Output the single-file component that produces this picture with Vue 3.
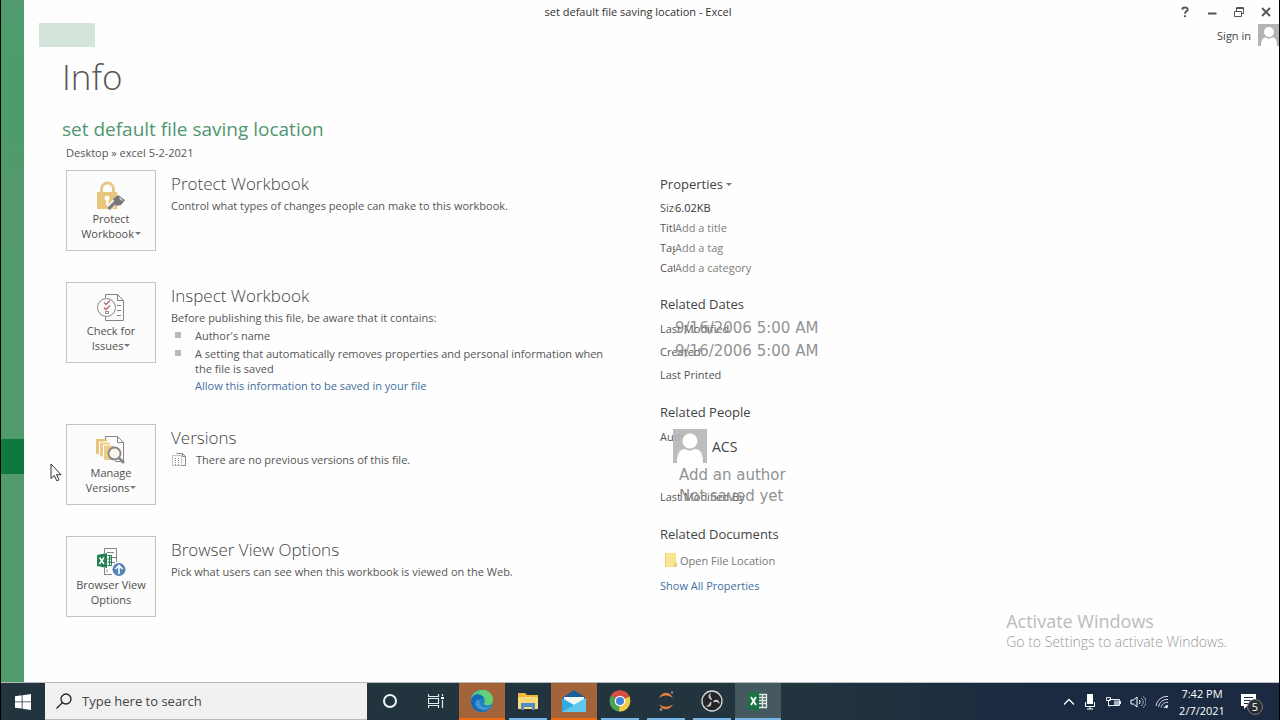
<script setup>
import { ref } from 'vue'

const search = ref('')

const details = [
  { label: 'Size', value: '6.02KB', dark: true },
  { label: 'Title', value: 'Add a title' },
  { label: 'Tags', value: 'Add a tag' },
  { label: 'Categories', value: 'Add a category' }
]

const dates = [
  { label: 'Last Modified', value: '9/16/2006 5:00 AM' },
  { label: 'Created', value: '9/16/2006 5:00 AM' },
  { label: 'Last Printed', value: '' }
]
</script>

<template>
  <div class="screen">
    <div class="window">
      <nav class="rail" aria-label="Backstage">
        <button class="rail-item" type="button" aria-label="Selected command"></button>
      </nav>

      <div class="backstage">
        <header class="titlebar">
          <span class="title">set default file saving location - Excel</span>
          <div class="controls">
            <button type="button" aria-label="Help">
              <svg width="12" height="12" viewBox="0 0 12 12" fill="none" stroke="#555" stroke-width="2"><path d="M3.2 3.6C3.4 0.8 8.8 0.8 8.6 3.7 8.5 5.4 6 5.3 6 7.8M6 9.2V11" /></svg>
            </button>
            <button type="button" aria-label="Minimize">
              <svg width="12" height="12" viewBox="0 0 12 12" fill="none" stroke="#555" stroke-width="2"><path d="M2 7.5H10.500" /></svg>
            </button>
            <button type="button" aria-label="Restore">
              <svg width="12" height="12" viewBox="0 0 12 12" fill="none" stroke="#555"><path d="M1.500 5.500H8.500V10.500H1.500ZM3.500 5V1.500H10.500V7.500H9M3.500 2.500H10.500" /></svg>
            </button>
            <button type="button" aria-label="Close">
              <svg width="12" height="12" viewBox="0 0 12 12" fill="none" stroke="#555" stroke-width="1.800"><path d="M2 2L10 10M10 2L2 10" /></svg>
            </button>
          </div>
        </header>

        <div class="account">
          <div class="back-tile"></div>
          <button class="signin" type="button">
            <span>Sign in</span>
            <svg width="21" height="22" viewBox="0 0 21 22"><path fill="#b4b4b4" d="M0 0H21V22H0Z" /><circle cx="11" cy="8" r="5" fill="#fff" /><path fill="#fff" d="M3 22C3 15 6 13 8 13.500L11 15 14 13.500C17 13 19 15 19 22Z" /></svg>
          </button>
        </div>

        <main class="page">
          <h1>Info</h1>
          <h2 class="doc-name">set default file saving location</h2>
          <p class="path">Desktop » excel 5-2-2021</p>

          <div class="columns">
            <div class="actions">
              <section class="action">
                <button class="tile" type="button">
                  <svg width="32" height="30" viewBox="0 0 32 30">
                    <path d="M6.500 12V8A6 6 0 0 1 18.500 8V12" fill="none" stroke="#e6c789" stroke-width="3" />
                    <path d="M2 11H22V28H2Z" fill="#eac67c" />
                    <circle cx="12" cy="17" r="2.500" fill="#fff" /><path d="M11 18H13.500V24H11Z" fill="#fff" />
                    <path d="M14 27L22 19" stroke="#fff" stroke-width="6" />
                    <path d="M13.500 28L20 21.500" stroke="#808080" stroke-width="3.500" />
                    <path d="M18 18L23 14 30 19 26 24 21 25Z" fill="#777" /><path d="M24.500 17L27.500 19.500" stroke="#ddd" stroke-width="1.500" />
                  </svg>
                  <span>Protect<br>Workbook <i class="caret"></i></span>
                </button>
                <div>
                  <h3>Protect Workbook</h3>
                  <p>Control what types of changes people can make to this workbook.</p>
                </div>
              </section>

              <section class="action">
                <button class="tile" type="button">
                  <svg width="32" height="30" viewBox="0 0 32 30" fill="none" stroke="#858585">
                    <path d="M10.500 5V1.500H22.500L28.500 7.500V27.500H10.500V24M22.500 1.500V7.500H28.500" />
                    <path d="M22 12.500H26M22 17.500H26M22 22.500H26" />
                    <circle cx="11.500" cy="14.500" r="9" fill="#fcfcfc" />
                    <path d="M9 9.500L11 11.500 15 7.500M9 14.500L11 16.500 15 12.500" stroke="#bd6a70" stroke-width="1.300" />
                    <path d="M10.500 18.500H13.500V20.500H10.500Z" />
                  </svg>
                  <span>Check for<br>Issues <i class="caret"></i></span>
                </button>
                <div>
                  <h3>Inspect Workbook</h3>
                  <p>Before publishing this file, be aware that it contains:</p>
                  <ul class="findings">
                    <li>Author's name</li>
                    <li>A setting that automatically removes properties and personal information when the file is saved</li>
                  </ul>
                  <a class="allow" href="#allow">Allow this information to be saved in your file</a>
                </div>
              </section>

              <section class="action">
                <button class="tile" type="button">
                  <svg width="32" height="30" viewBox="0 0 32 30" fill="none">
                    <path d="M10.500 4V1.500H22.500L28.500 7.500V26.500H20M22.500 1.500V7.500H28.500" stroke="#858585" />
                    <path d="M1 4H12V19H1Z" fill="#e7c37c" /><path d="M4.500 7H15.500V22H4.500Z" fill="#eccb87" stroke="#fff" /><path d="M8.500 10H19.500V25.500H8.500Z" fill="#edcd8b" stroke="#fff" />
                    <circle cx="19.500" cy="18.500" r="6" fill="#f9f5ec" stroke="#858585" stroke-width="1.800" />
                    <path d="M24 23L29 28" stroke="#858585" stroke-width="2.600" />
                  </svg>
                  <span>Manage<br>Versions <i class="caret"></i></span>
                </button>
                <div>
                  <h3>Versions</h3>
                  <p class="no-versions">
                    <svg width="16" height="14" viewBox="0 0 16 14" fill="none" stroke="#888"><path d="M5.500 0.500H11.500L14.500 3.500V12.500H11M11.500 0.500V3.500H14.500" /><path d="M1.500 2.500H10.500V12.500H1.500ZM4.500 5V12M7.500 5V12" stroke-dasharray="1 1" /></svg>
                    <span>There are no previous versions of this file.</span>
                  </p>
                </div>
              </section>

              <section class="action">
                <button class="tile" type="button">
                  <svg width="32" height="30" viewBox="0 0 32 30" fill="none">
                    <path d="M9.500 6V1.500H21.500V15M9.500 21V27.500H17" stroke="#858585" />
                    <path d="M12 5.500H19M15 10.500H21M15 15.500H20M12 22.500V25" stroke="#858585" />
                    <path d="M2 8L12 6V21L2 19Z" fill="#258052" /><path d="M4.500 10.500L9 17M9 10.500L4.500 17" stroke="#fff" stroke-width="1.500" />
                    <path d="M12.500 8.500H16.500V18.500H12.500M14.500 8.500V18.500M12.500 12H16.500M12.500 15H16.500" stroke="#258052" />
                    <circle cx="24" cy="22.500" r="6.500" fill="#5584b8" /><path d="M24 27V19M20.500 22L24 18.500 27.500 22" stroke="#fff" stroke-width="1.600" />
                  </svg>
                  <span>Browser View<br>Options</span>
                </button>
                <div>
                  <h3>Browser View Options</h3>
                  <p>Pick what users can see when this workbook is viewed on the Web.</p>
                </div>
              </section>
            </div>

            <aside class="props">
              <section>
                <button class="props-menu" type="button">Properties <i class="caret"></i></button>
                <dl class="details">
                  <div v-for="d in details" :key="d.label">
                    <dt>{{ d.label }}</dt>
                    <dd :class="{ dark: d.dark }">{{ d.value }}</dd>
                  </div>
                </dl>
              </section>

              <section>
                <h4>Related Dates</h4>
                <dl class="dates">
                  <div v-for="d in dates" :key="d.label">
                    <dt>{{ d.label }}</dt>
                    <dd class="wide">{{ d.value }}</dd>
                  </div>
                </dl>
              </section>

              <section>
                <h4>Related People</h4>
                <dl class="people">
                  <div class="author">
                    <dt>Author</dt>
                    <dd>
                      <span class="person">
                        <svg width="34" height="34" viewBox="0 0 34 34"><path fill="#b6b6b6" fill-opacity="0.900" d="M0 0H34V34H0Z" /><circle cx="17" cy="12" r="7.500" fill="#fff" /><path fill="#fff" d="M4 34C4 24 7 20 12 20L17 22 22 20C27 20 30 24 30 34Z" /></svg>
                        <span>ACS</span>
                      </span>
                      <span class="wide">Add an author</span>
                    </dd>
                  </div>
                  <div class="modifier">
                    <dt>Last Modified By</dt>
                    <dd class="wide">Not saved yet</dd>
                  </div>
                </dl>
              </section>

              <section>
                <h4>Related Documents</h4>
                <a class="open-file" href="#open">
                  <svg width="14" height="16" viewBox="0 0 14 16"><path fill="#f6e48f" d="M1 1H12V10L13 11V15H1Z" /><path fill="#e8d077" d="M1 1H2V15H1ZM10 11H13V15H10Z" /></svg>
                  <span>Open File Location</span>
                </a>
                <a class="show-all" href="#all">Show All Properties</a>
              </section>
            </aside>
          </div>
        </main>
      </div>

      <div class="watermark">
        <strong>Activate Windows</strong>
        <span>Go to Settings to activate Windows.</span>
      </div>

      <svg class="pointer" width="12" height="19" viewBox="0 0 12 19"><path d="M1 1V15.500L4.300 12.500 6.800 17.800 9 16.800 6.500 11.700H11Z" fill="#fff" stroke="#333" /></svg>
    </div>

    <footer class="taskbar">
      <button class="start" type="button" aria-label="Start">
        <svg width="16" height="16" viewBox="0 0 16 16" fill="#fff"><path d="M0 2.300L6.700 1.300V7.500H0ZM7.500 1.200L16 0V7.500H7.500ZM0 8.300H6.700V14.600L0 13.700ZM7.500 8.300H16V16L7.500 14.800Z" /></svg>
      </button>
      <label class="search">
        <svg width="16" height="16" viewBox="0 0 16 16" fill="none" stroke="#222" stroke-width="1.300"><circle cx="10" cy="6" r="5" /><path d="M6.500 9.500L0.500 15.500" /></svg>
        <input v-model="search" type="text" placeholder="Type here to search" aria-label="Type here to search">
      </label>
      <div class="apps">
        <button type="button" aria-label="Cortana">
          <svg width="16" height="16" viewBox="0 0 16 16"><circle cx="8" cy="8" r="6" fill="none" stroke="#edf3f5" stroke-width="2" /></svg>
        </button>
        <button type="button" aria-label="Task View">
          <svg width="16" height="16" viewBox="0 0 16 16" fill="none" stroke="#e3eaec" stroke-width="1.200"><path d="M0.500 1V3.500H10.500V1M0.500 5.500H10.500V10.500H0.500ZM0.500 15V12.500H10.500V15M14.500 1V3M14.500 7V15" /><path d="M13 4H16V6H13Z" fill="#fff" stroke="none" /></svg>
        </button>
        <button class="alert" type="button" aria-label="Edge">
          <svg width="24" height="24" viewBox="0 0 24 24"><circle cx="12" cy="12" r="11" fill="#1c83c8" /><path d="M1 11C2 -2 22 -3 23 11 23 17 16 17 14 15 17 10 11 6 6 8 3 9 1 11 1 11Z" fill="#49c7a0" /><path d="M1 11C3 3 13 4 14 10 10 8 8 12 9 15 10 19 15 21 20 19 11 27 0 21 1 11Z" fill="#1769b5" /><path d="M12 1C19 1 24 7 23 12 22 17 16 17 14 15 17 10 15 6 8 5Z" fill="#65cf74" /><path d="M10 11C8 17 14 20 21 17 17 23 9 22 6 17 4 13 7 10 10 11Z" fill="#4196d1" /></svg>
        </button>
        <button class="open" type="button" aria-label="File Explorer">
          <svg width="22" height="20" viewBox="0 0 22 20"><path d="M1 2H8L10 4H21V18H1Z" fill="#efb73e" /><path d="M1 6H21V18H1Z" fill="#fbd975" /><path d="M4 12H18V19H15V16H7V19H4Z" fill="#538dc6" /></svg>
        </button>
        <button class="alert" type="button" aria-label="Mail">
          <svg width="24" height="22" viewBox="0 0 24 22"><path d="M0 8L12 0 24 8V22H0Z" fill="#175e9c" /><path d="M2 7H22V17H2Z" fill="#f2f6f8" /><path d="M0 8L12 15 24 8V22H0Z" fill="#34abe0" /><path d="M0 22L24 8V22Z" fill="#60c8ef" /></svg>
        </button>
        <button class="open" type="button" aria-label="Chrome">
          <svg width="22" height="22" viewBox="0 0 22 22"><circle cx="11" cy="11" r="10.500" fill="#4ba454" /><path d="M11 11L2 5.500C7 -2 17 -1 20.500 6.500Z" fill="#d84e40" /><path d="M11 11L20.500 6.500C23 14 18 22 10 21.500Z" fill="#f4ca45" /><circle cx="11" cy="11" r="5.300" fill="#fff" /><circle cx="11" cy="11" r="4" fill="#4384df" /></svg>
        </button>
        <button class="open" type="button" aria-label="Jupyter">
          <svg width="18" height="20" viewBox="0 0 18 20"><path d="M2 7C5 0 13 0 16 7 12 3.500 6 3.500 2 7ZM2 13C5 20 13 20 16 13 12 16.500 6 16.500 2 13Z" fill="#e67c3b" /><circle cx="15" cy="1.500" r="1" fill="#aaa" /><circle cx="4" cy="18.500" r="1.200" fill="#aaa" /></svg>
        </button>
        <button class="open" type="button" aria-label="OBS">
          <svg width="22" height="22" viewBox="0 0 22 22"><circle cx="11" cy="11" r="10" fill="#252629" stroke="#d8dadc" stroke-width="1.300" /><g fill="#c8cacc"><path d="M10 3C6 5 7 9 11 10 11 7 8 7 10 3Z" /><path d="M10 3C6 5 7 9 11 10 11 7 8 7 10 3Z" transform="rotate(120 11 11)" /><path d="M10 3C6 5 7 9 11 10 11 7 8 7 10 3Z" transform="rotate(240 11 11)" /></g></svg>
        </button>
        <button class="open current" type="button" aria-label="Excel">
          <svg width="20" height="20" viewBox="0 0 20 20" fill="none"><path d="M0 2L11 0V20L0 18Z" fill="#187542" /><path d="M3 6L8 14M8 6L3 14" stroke="#fff" stroke-width="1.800" /><path d="M11 3.500H18.500V16.500H11M14.500 3.500V16.500M11 6.500H18.500M11 9.500H18.500M11 12.500H18.500" stroke="#dcece2" stroke-width="1.300" /></svg>
        </button>
      </div>
      <div class="tray">
        <button type="button" aria-label="Show hidden icons"><svg width="12" height="14" viewBox="0 0 12 14" fill="none" stroke="#fff" stroke-width="1.300"><path d="M1 9.500L6 4.500 11 9.500" /></svg></button>
        <button type="button" aria-label="Microphone"><svg width="12" height="16" viewBox="0 0 12 16" fill="none" stroke="#fff"><path d="M3 0H9V10H3Z" fill="#fff" stroke="none" /><path d="M1.500 8V12.500H10.500V8M6 12V15M3 15H9" /></svg></button>
        <button type="button" aria-label="Battery"><svg width="16" height="14" viewBox="0 0 16 14" fill="none" stroke="#e9edf2"><path d="M4 4.500H14.500V10.500H4.500M15.500 6V9" /><path d="M9 5.500H14V10H9Z" fill="#aab2c0" stroke="none" /><path d="M1.500 2.500H5.500V5.500H1.500ZM3.500 5.500V11H5" /></svg></button>
        <button type="button" aria-label="Volume"><svg width="16" height="14" viewBox="0 0 16 14" fill="none" stroke="#fff"><path d="M1 5H3.500L7 2V12L3.500 9H1ZM9 5C10.500 6 10.500 8 9 9" /><path d="M11 3C14 5 14 9 11 11M13 1.500C17 4 17 10 13 12.500" stroke="#9ca5b4" /></svg></button>
        <button type="button" aria-label="Network"><svg width="14" height="14" viewBox="0 0 14 14" fill="none" stroke="#d7dce5"><path d="M1 11C2 5 7 1 13 1.500M3.500 12C4.500 7 8 4 13 4.500M6 12.500C7 9 9 7 13 7.500M9 13C9.500 11.500 10.500 10.500 13 10.500" /><circle cx="11.500" cy="12" r="1.300" fill="#fff" stroke="none" /></svg></button>
        <button class="clock" type="button"><span>7:42 PM</span><span>2/7/2021</span></button>
        <button class="notify" type="button" aria-label="5 notifications">
          <svg width="16" height="16" viewBox="0 0 16 16"><path fill="#fff" d="M0 0H15V12H6L3 15V12H0Z" /><path d="M3 3.500H12M3 6.500H12M3 9.500H9" stroke="#1b2941" /></svg>
          <span class="badge">5</span>
        </button>
      </div>
    </footer>
  </div>
</template>

<style>
body {
  margin: 0;
}
</style>

<style scoped>
* {
  box-sizing: border-box;
}

.screen {
  display: flex;
  flex-direction: column;
  min-height: 100vh;
  border: solid #000;
  border-width: 0 1px;
  background: #fefefe;
  color: #555;
  font: 11px/15px "Open Sans", "Noto Sans", sans-serif;
}

h1, h2, h3, h4, p, dl, dd, ul {
  margin: 0;
  padding: 0;
  font-weight: 400;
}

button {
  padding: 0;
  border: 0;
  background: none;
  color: inherit;
  font: inherit;
}

a {
  color: #426f9f;
  text-decoration: none;
}

svg {
  flex: none;
  display: block;
}

.window {
  position: relative;
  flex: 1;
  display: flex;
}

.rail {
  flex: none;
  width: 23px;
  padding-top: 439px;
  background: linear-gradient(#519b6f, #4a9d66 90px, #529a6c 180px, #509b6c);
}

.rail-item {
  display: block;
  width: 100%;
  height: 35px;
  background: #0d7a3c;
}

.backstage {
  flex: 1;
  min-width: 0;
}

.titlebar {
  display: grid;
  grid-template-columns: 1fr auto 1fr;
  align-items: center;
  height: 23px;
  padding-right: 7px;
  color: #333;
}

.title {
  grid-column: 2;
  margin-right: 20px;
}

.controls {
  display: flex;
  justify-content: flex-end;
  gap: 15px;
}

.account {
  display: flex;
  justify-content: space-between;
  height: 24px;
  padding-left: 15px;
}

.back-tile {
  width: 56px;
  background: #d5e4db;
}

.signin {
  display: flex;
  align-items: center;
  gap: 7px;
  color: #444;
}

.page {
  padding: 6px 24px 32px 38px;
}

h1 {
  color: #555;
  font-size: 35px;
  font-weight: 300;
  line-height: 48px;
}

.doc-name {
  margin-top: 14px;
  color: #4f9670;
  font-size: 19px;
  line-height: 28px;
}

.path {
  margin: 2px 0 10px 4px;
}

.columns {
  display: grid;
  grid-template-columns: 540px 1fr;
  column-gap: 54px;
  padding-left: 4px;
}

.actions {
  display: flex;
  flex-direction: column;
  gap: 31px;
}

.action {
  display: grid;
  grid-template-columns: 90px 1fr;
  column-gap: 15px;
  align-items: start;
}

.tile {
  display: flex;
  flex-direction: column;
  align-items: center;
  height: 81px;
  padding-top: 10px;
  border: 1px solid #c3c3c3;
  background: #fcfcfc;
  color: #505050;
}

.caret {
  display: inline-block;
  border: solid transparent;
  border-width: 3px 3px 0;
  border-top-color: #777;
  vertical-align: 3px;
}

.tile .caret {
  margin-left: -2px;
}

h3 {
  margin-bottom: 1px;
  color: #444;
  font-size: 17px;
  font-weight: 300;
  line-height: 27px;
}

.findings {
  list-style: none;
}

.findings li {
  position: relative;
  margin-top: 3px;
  padding-left: 24px;
}

.findings li::before {
  content: "";
  position: absolute;
  top: 4px;
  left: 4px;
  width: 6px;
  height: 6px;
  background: #bababa;
}

.allow {
  display: block;
  margin: 2px 0 0 24px;
}

.no-versions {
  display: flex;
  align-items: center;
  gap: 9px;
}

.props {
  display: flex;
  flex-direction: column;
  gap: 16px;
  padding-top: 4px;
  white-space: nowrap;
}

h4, .props-menu {
  display: block;
  color: #444;
  font-size: 13px;
  line-height: 20px;
}

.props dl > div {
  display: grid;
  grid-template-columns: 15px 1fr;
}

.details {
  padding-top: 4px;
  line-height: 20px;
}

.details dt {
  overflow: hidden;
}

.details dd {
  color: #808080;
}

.details dd.dark {
  color: #333;
}

.dates {
  padding-top: 3px;
  line-height: 23px;
}

.wide {
  color: #929292;
  font-family: "DejaVu Sans", sans-serif;
  font-size: 15px;
}

.people {
  padding: 7px 0 4px;
}

.person {
  display: flex;
  align-items: center;
  gap: 5px;
  margin-left: -2px;
  color: #444;
  font-size: 14px;
}

.author .wide {
  display: block;
  padding: 5px 0 0 4px;
  line-height: 15px;
}

.modifier {
  padding-top: 6px;
}

.modifier .wide {
  padding-left: 4px;
}

.open-file {
  display: flex;
  align-items: center;
  gap: 2px;
  padding: 8px 0 0 4px;
  color: #777;
}

.show-all {
  display: block;
  padding-top: 10px;
}

.watermark {
  position: absolute;
  right: 52px;
  bottom: 30px;
  color: #999;
  font-size: 14px;
  font-weight: 300;
  line-height: 20px;
}

.watermark strong {
  display: block;
  color: #bbb;
  font-size: 18px;
  font-weight: 400;
  line-height: 22px;
}

.pointer {
  position: absolute;
  top: 463px;
  left: 49px;
}

.taskbar {
  display: flex;
  height: 38px;
  border-top: 1px solid #b8bcbe;
  background: linear-gradient(90deg, #22353e, #22353e 62%, #1b2941 82%);
  color: #fff;
}

.start {
  display: grid;
  place-items: center;
  width: 44px;
}

.search {
  display: flex;
  align-items: center;
  gap: 10px;
  width: 322px;
  padding-left: 11px;
  border-bottom: 1px solid #bbb;
  background: #f1f1f1;
}

.search input {
  flex: 1;
  min-width: 0;
  padding: 0;
  border: 0;
  outline: 0;
  background: none;
  font: 13px/20px "Open Sans", "Noto Sans", sans-serif;
}

.search input::placeholder {
  color: #444;
  opacity: 1;
}

.apps {
  display: flex;
}

.apps button {
  display: grid;
  place-items: center;
  width: 46px;
  border: solid transparent;
  border-width: 0 0 2px;
}

.apps .open {
  background: linear-gradient(#76b5e5, #76b5e5) bottom / 38px 2px no-repeat border-box;
}

.apps .alert {
  border-bottom-color: #f06a13;
  background: #a4643a;
  background-clip: padding-box;
}

.apps .current {
  border-bottom-color: #76b5e5;
  background: #465860;
}

.tray {
  display: flex;
  align-items: center;
  gap: 9px;
  margin-left: auto;
  padding-right: 16px;
}

.clock {
  display: flex;
  flex-direction: column;
  width: 48px;
  line-height: 17px;
}

.clock span {
  width: 100%;
  text-align: center;
}

.notify {
  position: relative;
  margin-left: 6px;
  padding-right: 6px;
}

.badge {
  position: absolute;
  top: 5px;
  right: 0;
  width: 16px;
  height: 16px;
  border: 1px solid #777;
  border-radius: 50%;
  background: #2a2d35;
  font-size: 11px;
  line-height: 14px;
  text-align: center;
}
</style>
